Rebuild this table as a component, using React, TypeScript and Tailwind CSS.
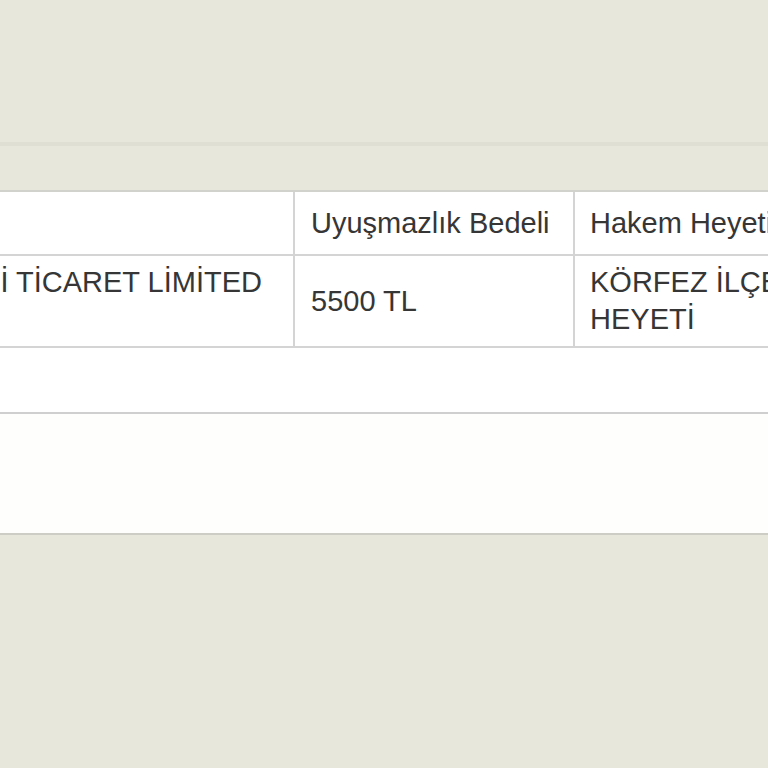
import React from "react";

export default function App() {
  return (
    <div className="w-[768px] h-[768px] overflow-hidden bg-[#e8e7dc] font-['Liberation_Sans',Arial,sans-serif] text-[#363636]">
      <div className="h-[142px]" />
      <div className="h-[4px] bg-[#e0dfd3]" />
      <div className="h-[46px] border-b-2 border-[#d2d2cc]" />
      <div className="bg-white">
        <div className="ml-[-307px] w-[1500px] text-[29px] leading-[37px]">
          {/* header row */}
          <div className="flex border-b-2 border-[#d4d4d4]">
            <div className="w-[602px] shrink-0 border-r-2 border-[#d4d4d4] pl-4 pt-[13px] pb-[12px]">
              <span className="whitespace-nowrap">Başvurulan</span>
            </div>
            <div className="w-[280px] shrink-0 border-r-2 border-[#d4d4d4] pl-4 pt-[13px] pb-[12px] whitespace-nowrap">
              Uyuşmazlık Bedeli
            </div>
            <div className="w-[600px] shrink-0 pl-[15px] pt-[13px] pb-[12px] whitespace-nowrap">
              Hakem Heyeti Adı
            </div>
          </div>
          {/* body row */}
          <div className="flex border-b-2 border-[#d4d4d4]">
            <div className="w-[602px] shrink-0 border-r-2 border-[#d4d4d4] pl-4 py-[8px]">
              <div className="text-right pr-[31px] whitespace-nowrap">
                GIDA SANAYİ TİCARET LİMİTED
              </div>
              <div className="whitespace-nowrap">ŞİRKETİ</div>
            </div>
            <div className="w-[280px] shrink-0 border-r-2 border-[#d4d4d4] pl-4 py-[8px] flex items-center whitespace-nowrap">
              5500 TL
            </div>
            <div className="w-[600px] shrink-0 pl-[15px] py-[8px] whitespace-nowrap">
              KÖRFEZ İLÇE TÜKETİCİ HAKEM
              <br />
              HEYETİ
            </div>
          </div>
        </div>
        <div className="h-[64px]" />
        <div className="h-[2px] bg-[#cfcfcf]" />
        <div className="h-[119px] bg-[#fefefc]" />
        <div className="h-[2px] bg-[#cdcdc6]" />
      </div>
    </div>
  );
}
